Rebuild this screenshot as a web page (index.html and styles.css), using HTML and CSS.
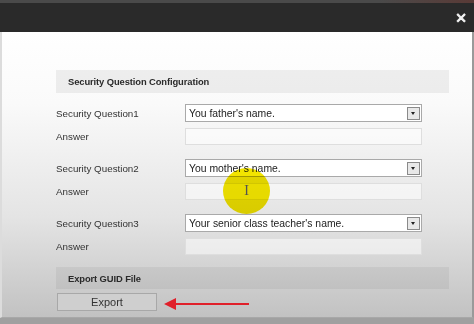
FILE: index.html
```html
<!DOCTYPE html>
<html>
<head>
	<title>Security Question Configuration</title>
	<link rel="stylesheet" href="styles.css">
</head>
<body>
	<div class="screen">
		<div class="top-strip"></div>
		<div class="title-bar">
			<span class="close">&#x2715;</span>
		</div>
		<div class="dialog">
			<div class="band">Security Question Configuration</div>

			<div class="group">
				<div class="row">
					<label>Security Question1</label>
					<div class="select"><span>You father's name.</span><i class="drop"></i></div>
				</div>
				<div class="row">
					<label>Answer</label>
					<div class="input"></div>
				</div>
			</div>

			<div class="group">
				<div class="row">
					<label>Security Question2</label>
					<div class="select"><span>You mother's name.</span><i class="drop"></i></div>
				</div>
				<div class="row">
					<label>Answer</label>
					<div class="input"></div>
				</div>
			</div>

			<div class="group">
				<div class="row">
					<label>Security Question3</label>
					<div class="select"><span>Your senior class teacher's name.</span><i class="drop"></i></div>
				</div>
				<div class="row">
					<label>Answer</label>
					<div class="input"></div>
				</div>
			</div>

			<div class="band band-export">Export GUID File</div>
			<div class="button">Export</div>

			<!-- overlays: cursor highlight and annotation arrow -->
			<div class="highlight"><span class="ibeam">I</span></div>
			<svg class="arrow" width="90" height="14" viewBox="0 0 90 14">
				<line x1="10" y1="7" x2="86" y2="7" stroke="#e0202a" stroke-width="2"/>
				<polygon points="1,7 13,1 13,13" fill="#e0202a"/>
			</svg>
		</div>
		<div class="bottom-strip"></div>
	</div>
</body>
</html>
```

FILE: styles.css
```css
body {
	margin: 0;
	background: #9c9c9c;
	font-family: "Liberation Sans", Arial, sans-serif;
}
.screen {
	width: 474px;
	height: 324px;
	display: flex;
	flex-direction: column;
	overflow: hidden;
}
.top-strip {
	height: 3px;
	background: linear-gradient(to right, #4a4a4a 80%, #5a3a36);
}
.title-bar {
	height: 29px;
	background: #2a2a2a;
	display: flex;
	align-items: center;
	justify-content: flex-end;
	padding-right: 7px;
}
.close {
	color: #f4f4f4;
	font-family: "DejaVu Sans", sans-serif;
	font-weight: bold;
	font-size: 14px;
	-webkit-text-stroke: 0.8px #f4f4f4;
}
.dialog {
	position: relative;
	height: 286px;
	box-sizing: border-box;
	border-left: 2px solid #dcdcdc;
	border-right: 2px solid #9a9a9a;
	border-bottom: 1px solid #a8a8a8;
	background: linear-gradient(to bottom, #ffffff 0%, #fafafa 25%, #e4e4e4 65%, #c2c2c2 100%);
	padding: 38px 23px 0 54px;
	display: flex;
	flex-direction: column;
}
.band {
	height: 23px;
	background: rgba(0, 0, 0, 0.06);
	display: flex;
	align-items: center;
	padding-left: 12px;
	font-size: 9.4px;
	font-weight: bold;
	letter-spacing: -0.1px;
	color: #2a2a2a;
}
.group {
	display: flex;
	flex-direction: column;
	gap: 6px;
	margin-top: 11px;
}
.group + .group {
	margin-top: 14px;
}
.row {
	display: flex;
	align-items: center;
}
.row label {
	width: 129px;
	font-size: 9.8px;
	color: #333;
}
.select {
	width: 237px;
	height: 18px;
	box-sizing: border-box;
	border: 1px solid #a9a9a9;
	background: #fff;
	display: flex;
	align-items: center;
	padding: 0 1px 0 3px;
	font-size: 10.4px;
	color: #222;
}
.select span {
	flex: 1;
}
.drop {
	width: 13px;
	height: 13px;
	box-sizing: border-box;
	border: 1px solid #8a8a8a;
	background: #e8e8e8;
	position: relative;
}
.drop::after {
	content: "";
	position: absolute;
	left: 3px;
	top: 4px;
	border-left: 2.5px solid transparent;
	border-right: 2.5px solid transparent;
	border-top: 3px solid #222;
}
.input {
	width: 237px;
	height: 17px;
	box-sizing: border-box;
	border: 1px solid #dedede;
	background: rgba(255, 255, 255, 0.5);
}
.band-export {
	margin-top: 12px;
	height: 22px;
	background: rgba(0, 0, 0, 0.05);
}
.button {
	margin-top: 4px;
	margin-left: 1px;
	width: 100px;
	height: 18px;
	box-sizing: border-box;
	border: 1px solid #a8a8a8;
	background: #cfcfcf;
	display: flex;
	align-items: center;
	justify-content: center;
	font-size: 11px;
	color: #333;
}
.highlight {
	position: absolute;
	left: 221px;
	top: 136px;
	width: 47px;
	height: 46px;
	border-radius: 50%;
	background: #f2e400;
	mix-blend-mode: multiply;
	display: flex;
	align-items: center;
	justify-content: center;
}
.ibeam {
	font-family: "Liberation Serif", serif;
	font-size: 14px;
	color: #555;
}
.arrow {
	position: absolute;
	left: 161px;
	top: 265px;
}
.bottom-strip {
	flex: 1;
	background: #a0a0a0;
}
```
